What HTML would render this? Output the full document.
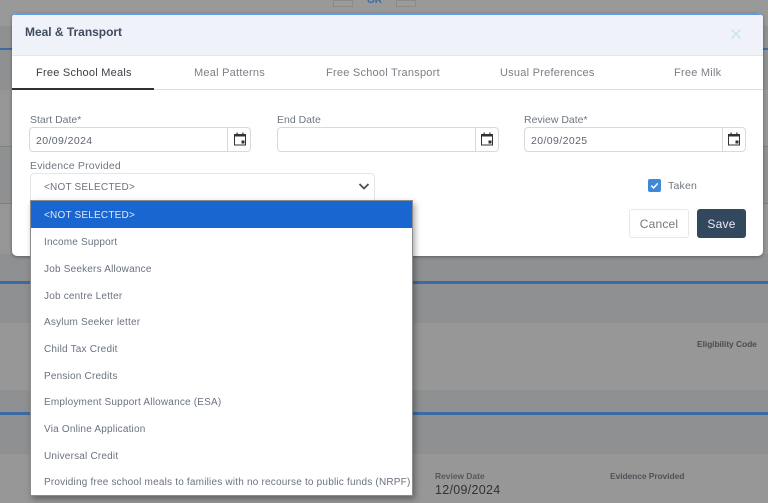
<!DOCTYPE html>
<html><head><meta charset="utf-8"><style>
html,body{margin:0;padding:0;width:768px;height:503px;overflow:hidden;background:#8f9091}
body{position:relative;font-family:"Liberation Sans",sans-serif;-webkit-font-smoothing:antialiased}
div{position:absolute;box-sizing:border-box}
.t{white-space:nowrap;line-height:14px;height:14px}
.inp{height:25px;border:1px solid #d9d9d9;border-radius:4px;background:#fff;width:222px;top:127px}
.add{position:absolute;right:0;top:0;bottom:0;width:23px;border-left:1px solid #d9d9d9}
.lbl{font-size:10.5px;color:#6f7780;top:112px}
.val{font-size:10.5px;color:#5f6670;letter-spacing:.4px}
.tab{font-size:11px;color:#7b7f85;top:66px;letter-spacing:.24px}
.opt{left:44px;font-size:10px;color:#6b7280;letter-spacing:.2px}
svg{position:absolute}
</style></head><body>
<div style="left:0;top:0;width:768px;height:26px;background:#999"></div>
<div style="left:333px;top:0;width:20px;height:7px;background:#9b9b9b;border:1px solid #8a8a8a"></div>
<div style="left:396px;top:0;width:20px;height:7px;background:#9b9b9b;border:1px solid #8a8a8a"></div>
<div class="t" style="left:367px;top:-6px;font-size:10px;color:#3c6aa5;font-weight:bold">GR</div>
<div style="left:0;top:26px;width:768px;height:22px;background:#8f9091"></div>
<div style="left:0;top:48px;width:768px;height:2px;background:#3c6aa5"></div>
<div style="left:0;top:90px;width:768px;height:56px;background:#969696"></div>
<div style="left:0;top:146px;width:768px;height:1px;background:#7f8081"></div>
<div style="left:0;top:203px;width:768px;height:1px;background:#7f8081"></div>
<div style="left:0;top:204px;width:768px;height:50px;background:#969696"></div>
<div style="left:0;top:258px;width:768px;height:23px;background:#8f9091"></div>
<div style="left:0;top:281px;width:768px;height:3px;background:#3c6aa5"></div>
<div style="left:0;top:323px;width:768px;height:67px;background:#979797"></div>
<div style="left:0;top:412px;width:768px;height:3px;background:#3c6aa5"></div>
<div style="left:0;top:454px;width:768px;height:49px;background:#979797"></div>
<div class="t" style="left:697px;top:337px;font-size:8.5px;color:#4a4c4f;font-weight:bold;letter-spacing:-.1px">Eligibility Code</div>
<div class="t" style="left:435px;top:469px;font-size:8.5px;color:#55585c;font-weight:bold;letter-spacing:-.05px">Review Date</div>
<div class="t" style="left:610px;top:469px;font-size:8.5px;color:#4f5256;font-weight:bold;letter-spacing:-.1px">Evidence Provided</div>
<div class="t" style="left:435px;top:483px;font-size:12.5px;color:#2f3237;letter-spacing:.3px">12/09/2024</div>

<div style="left:12px;top:13px;width:751px;height:243px;background:#fff;border-radius:5px;box-shadow:0 1px 3px rgba(0,0,0,.35);overflow:hidden">
 <div style="left:0;top:0;width:751px;height:43px;background:#eff3f9;border-top:2px solid #5b9be8;border-bottom:1px solid #e3e6ea"></div>
 <div style="left:0;top:76px;width:751px;height:1px;background:#dedede"></div>
 <div style="left:0;top:75px;width:142px;height:2px;background:#2f3136"></div>
</div>
<div class="t" style="left:25px;top:25px;font-size:12px;font-weight:bold;color:#414b5f;letter-spacing:-.02px">Meal &amp; Transport</div>
<svg style="left:730px;top:28px" width="12" height="12" viewBox="0 0 12 12"><path d="M1.5 1.5L10.5 10.5M10.5 1.5L1.5 10.5" stroke="#cfe5f2" stroke-width="1.6" fill="none"/></svg>

<div class="t tab" style="left:36px;color:#3d4046">Free School Meals</div>
<div class="t tab" style="left:194px">Meal Patterns</div>
<div class="t tab" style="left:326px">Free School Transport</div>
<div class="t tab" style="left:500px">Usual Preferences</div>
<div class="t tab" style="left:674px">Free Milk</div>

<div class="t lbl" style="left:30px;top:112.5px">Start Date*</div>
<div class="t lbl" style="left:277px;top:112.5px">End Date</div>
<div class="t lbl" style="left:524px;top:112.5px">Review Date*</div>

<div class="inp" style="left:29px"><div class="add"></div></div>
<div class="inp" style="left:277px"><div class="add"></div></div>
<div class="inp" style="left:524px"><div class="add"></div></div>
<div class="t val" style="left:36px;top:134px">20/09/2024</div>
<div class="t val" style="left:531px;top:134px">20/09/2025</div>

<svg style="left:233px;top:132px" width="14" height="14" viewBox="0 0 14 14"><rect x="1.5" y="2.5" width="11" height="10.5" fill="none" stroke="#333" stroke-width="1"/><rect x="1" y="2" width="12" height="2.5" fill="#333"/><rect x="3.5" y="0.5" width="1.2" height="2" fill="#333"/><rect x="9.3" y="0.5" width="1.2" height="2" fill="#333"/><rect x="8.5" y="8.5" width="3" height="3" fill="#333"/></svg>
<svg style="left:480px;top:132px" width="14" height="14" viewBox="0 0 14 14"><rect x="1.5" y="2.5" width="11" height="10.5" fill="none" stroke="#333" stroke-width="1"/><rect x="1" y="2" width="12" height="2.5" fill="#333"/><rect x="3.5" y="0.5" width="1.2" height="2" fill="#333"/><rect x="9.3" y="0.5" width="1.2" height="2" fill="#333"/><rect x="8.5" y="8.5" width="3" height="3" fill="#333"/></svg>
<svg style="left:727px;top:132px" width="14" height="14" viewBox="0 0 14 14"><rect x="1.5" y="2.5" width="11" height="10.5" fill="none" stroke="#333" stroke-width="1"/><rect x="1" y="2" width="12" height="2.5" fill="#333"/><rect x="3.5" y="0.5" width="1.2" height="2" fill="#333"/><rect x="9.3" y="0.5" width="1.2" height="2" fill="#333"/><rect x="8.5" y="8.5" width="3" height="3" fill="#333"/></svg>

<div class="t lbl" style="left:30px;top:159px;letter-spacing:.2px">Evidence Provided</div>
<div style="left:30px;top:173px;width:345px;height:32px;border:1px solid #e6e6e6;border-radius:4px;background:#fff"></div>
<div class="t" style="left:44px;top:181px;font-size:10px;color:#6b7280;letter-spacing:.2px">&lt;NOT SELECTED&gt;</div>
<svg style="left:358px;top:182px" width="12" height="9" viewBox="0 0 12 9"><path d="M1.5 2L6 6.5L10.5 2" fill="none" stroke="#4a4f55" stroke-width="1.8"/></svg>

<div style="left:648px;top:179px;width:13px;height:13px;background:#3f8ad8;border-radius:2px"></div>
<svg style="left:648px;top:179px" width="13" height="13" viewBox="0 0 13 13"><path d="M3.3 6.6L5.6 8.9L9.8 4.4" fill="none" stroke="#fff" stroke-width="1.5"/></svg>
<div class="t" style="left:668px;top:178.5px;font-size:10.5px;color:#6f7780;letter-spacing:.2px">Taken</div>

<div class="t" style="left:629px;top:209px;width:60px;height:29px;line-height:29px;text-align:center;border:1px solid #e8e8e8;border-radius:3px;background:#fff;font-size:12px;color:#75797f;letter-spacing:.2px">Cancel</div>
<div class="t" style="left:697px;top:209px;width:49px;height:29px;line-height:30px;text-align:center;border-radius:3px;background:#33475f;font-size:12px;color:#e8edf2;letter-spacing:.2px">Save</div>

<div style="left:30px;top:200px;width:383px;height:296px;background:#fff;border:1px solid #8c8c8c;border-top:1px solid #8c8c8c;box-shadow:2px 3px 6px rgba(0,0,0,.35)"></div>
<div style="left:31px;top:201px;width:381px;height:27px;background:#1a66d1"></div>
<div class="t opt" style="top:208.5px;color:#dfe8f6">&lt;NOT SELECTED&gt;</div>
<div class="t opt" style="top:235.5px">Income Support</div>
<div class="t opt" style="top:262.5px">Job Seekers Allowance</div>
<div class="t opt" style="top:289.5px">Job centre Letter</div>
<div class="t opt" style="top:315.5px">Asylum Seeker letter</div>
<div class="t opt" style="top:342.5px">Child Tax Credit</div>
<div class="t opt" style="top:369.5px">Pension Credits</div>
<div class="t opt" style="top:395.5px">Employment Support Allowance (ESA)</div>
<div class="t opt" style="top:422.5px">Via Online Application</div>
<div class="t opt" style="top:449.5px">Universal Credit</div>
<div class="t opt" style="top:475.5px">Providing free school meals to families with no recourse to public funds (NRPF)</div>
</body></html>
